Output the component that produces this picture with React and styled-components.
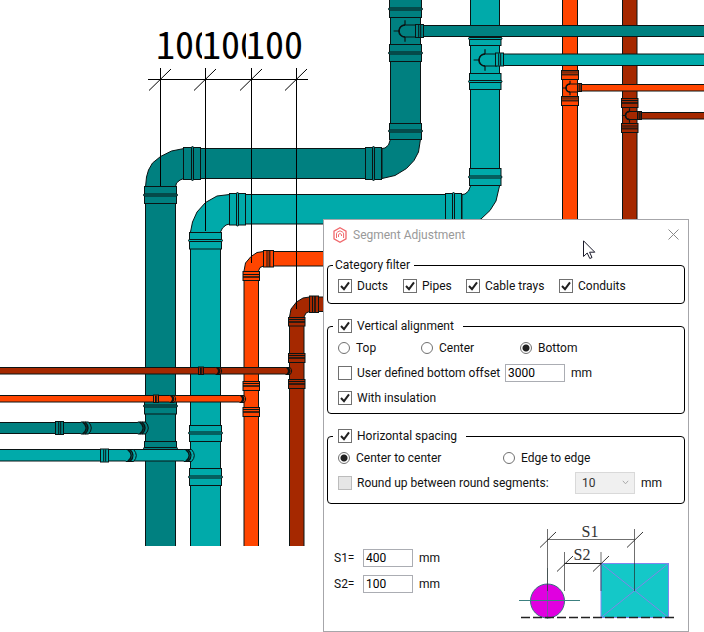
import { useState } from "react";
import styled, { createGlobalStyle, css } from "styled-components";

const colors = {
  darkTeal: "#008080",
  teal: "#00aaaa",
  orange: "#ff4500",
  brown: "#a52800",
  border: "#a6a6aa",
  text: "#111",
};

const GlobalStyle = createGlobalStyle`
  * {
    box-sizing: border-box;
  }

  body {
    margin: 0;
    background: #fff;
    color: ${colors.text};
    font-family: Roboto, "Open Sans", sans-serif;
    font-size: 12px;
    line-height: 16px;
  }
`;

const Workspace = styled.main`
  position: relative;
  min-height: 100vh;
  overflow: hidden;
`;

const Drawing = styled.svg`
  display: block;
  width: 100%;
  height: auto;
`;

const DimensionText = styled.text`
  fill: #000;
  stroke: none;
  font-family: "Noto Sans CJK SC", "Liberation Sans", sans-serif;
  font-size: 38px;
  font-feature-settings: "hwid";
`;

const Dialog = styled.section`
  position: absolute;
  top: 219px;
  right: 15px;
  width: 366px;
  padding: 0 3px 5px;
  background: #fff;
  border: 1px solid ${colors.border};
`;

const TitleBar = styled.header`
  display: flex;
  align-items: center;
  height: 29px;
  padding: 0 6px;
  margin-bottom: 8px;
`;

const Title = styled.h1`
  flex: 1;
  margin: 0 0 0 6px;
  color: #999;
  font-size: 12px;
  font-weight: 400;
`;

const CloseButton = styled.button`
  display: flex;
  padding: 0;
  border: none;
  background: none;
`;

const Groups = styled.div`
  display: flex;
  flex-direction: column;
  gap: 14px;
`;

const Group = styled.fieldset`
  min-width: 0;
  margin: 0;
  padding: ${({ $pad }) => $pad};
  border: 1px solid #000;
  border-radius: 4px;
`;

const Legend = styled.legend`
  height: 16px;
  margin-left: -5px;
  padding: ${({ $check }) => ($check ? "0 9px 0 5px" : "0 4px 0 2px")};
`;

const Row = styled.div`
  display: grid;
  grid-template-columns: ${({ $columns }) => $columns || "auto"};
  align-items: center;
  height: 25px;
`;

const Option = styled.label`
  display: flex;
  align-items: center;
  gap: 5px;
  white-space: nowrap;
`;

const Check = styled.input`
  appearance: none;
  flex: none;
  width: 14px;
  height: 14px;
  margin: 0;
  border: 1px solid #707070;
  background: #fff;

  ${({ $mark }) =>
    $mark &&
    css`
      &:checked {
        background: #fff
          url("data:image/svg+xml,%3Csvg xmlns='http://www.w3.org/2000/svg' viewBox='0 0 12 12'%3E%3Cpath d='M2 6l3 3.2L10 2.4' fill='none' stroke='%23212121' stroke-width='2'/%3E%3C/svg%3E");
      }
    `}

  &:disabled {
    border-color: #bcbcbc;
    background: #e6e6e6;
  }
`;

const Radio = styled.input`
  appearance: none;
  flex: none;
  width: 12px;
  height: 12px;
  margin: 0 1px 0 0;
  border: 1px solid #707070;
  border-radius: 50%;
  background: #fff;

  &:checked {
    background: radial-gradient(circle, #212121 3px, #fff 4px);
  }
`;

const NumberBox = styled.input`
  width: ${({ $width }) => $width}px;
  height: 18px;
  padding: 0 2px;
  border: 1px solid #abadb3;
  background: #fff;
  color: #000;
  font: inherit;
`;

const Unit = styled.span`
  padding-left: 6px;
`;

const SelectWrap = styled.div`
  display: grid;
  align-items: center;

  > * {
    grid-area: 1 / 1;
  }

  svg {
    justify-self: end;
    margin-right: 6px;
  }
`;

const Select = styled.select`
  appearance: none;
  width: 60px;
  height: 22px;
  padding: 0 6px;
  border: 1px solid #d9d9d9;
  border-radius: 0;
  background: #f0f0f0;
  color: #333;
  font: inherit;
  opacity: 1;
`;

const Footer = styled.div`
  display: flex;
  justify-content: space-between;
  padding: 14px 9px 0 7px;
`;

const Spacings = styled.div`
  padding-top: 27px;
`;

const SpacingRow = styled.div`
  display: grid;
  grid-template-columns: 29px 50px auto;
  align-items: center;
  height: 26px;
`;

const Cursor = styled.svg`
  position: absolute;
  top: 20px;
  left: 259px;
  pointer-events: none;
`;

// Rectangular sleeve round a vertical pipe, with the raised seam at `mid`
const SleeveV = ({ x, w, y, h, fill, mid, thin }) => (
  <g fill={fill}>
    <rect x={x - 1} y={y} width={w + 2} height={h} />
    {thin ? (
      <g>
        <path d={`M${x - 1} ${mid - 2}h${w + 2}`} />
        <path d={`M${x - 1} ${mid + 0.5}h${w + 2}`} strokeWidth="2" opacity="0.75" />
      </g>
    ) : (
      <rect x={x - 2} y={mid - 1} width={w + 4} height="2" rx="1" />
    )}
  </g>
);

const SleeveH = ({ y, w, x, h, fill, mid, thin }) => (
  <g fill={fill}>
    <rect x={x} y={y - 1} width={h} height={w + 2} />
    {thin ? (
      <g>
        <path d={`M${mid - 2} ${y - 1}v${w + 2}`} />
        <path d={`M${mid + 0.5} ${y - 1}v${w + 2}`} strokeWidth="2" opacity="0.75" />
      </g>
    ) : (
      <rect x={mid - 1} y={y - 2} width="2" height={w + 4} rx="1" />
    )}
  </g>
);

const Tee = ({ x, y, r, fill }) => (
  <g>
    <path d={`M${x + r * 2} ${y - r}H${x}a${r} ${r} 0 0 0 0 ${r * 2}h${r * 2}`} fill={fill} />
    <path d={`M${x} ${y - r}a${r} ${r} 0 0 0 0 ${r * 2}`} fill="none" strokeWidth="1.6" />
    <path
      d={`M${x} ${y - r - r * 0.8}v${r * 0.8}M${x} ${y + r}v${r * 0.8}M${x - r * 1.9} ${y}h${r * 0.9}`}
      strokeWidth="1.2"
    />
  </g>
);

// Curved end of a branch where it meets a round duct
const Saddle = ({ x, y, h, fill }) => (
  <g fill={fill}>
    <path
      d={`M${x - h * 0.35} ${y}H${x + h * 0.3}q${h * 0.45} ${h / 2} 0 ${h}H${x - h * 0.35}`}
    />
    <path
      d={`M${x - h * 0.2} ${y}q${h * 0.6} ${h / 2} 0 ${h}M${x} ${y}q${h * 0.5} ${h / 2} 0 ${h}`}
      fill="none"
      strokeWidth="1.4"
    />
  </g>
);

const Branch = ({ x1, x2, y, h, fill }) => (
  <g>
    <rect x={x1} y={y} width={x2 - x1} height={h} fill={fill} stroke="none" />
    <path d={`M${x1} ${y}H${x2}M${x1} ${y + h}H${x2}`} />
  </g>
);

const Coupling = ({ x, y, w, h, fill }) => (
  <g fill={fill}>
    <rect x={x} y={y - 0.5} width={w} height={h + 1} />
    <path d={`M${x + w * 0.4} ${y}v${h}M${x + w * 0.65} ${y}v${h}`} />
  </g>
);

const dimensions = [
  { x: 160.5, end: 186 },
  { x: 205.5, end: 231 },
  { x: 251.5, end: 263 },
  { x: 296.5, end: 309 },
];

const PipePlan = () => {
  const { darkTeal, teal, orange, brown } = colors;

  return (
    <Drawing viewBox="0 0 704 632" role="img" aria-label="Pipe layout">
      <g stroke="#0a1414" strokeWidth="1">
        {/* dark teal duct */}
        <g fill={darkTeal}>
          <path d="M145.5 546V187L146.5 177L148.5 170L152.5 163L160.5 156.500L171.500 151L184 148.500H382V178.500H184L180 180L176.500 183L175.500 187V546" />
          <path d="M390.500 0V139L388.500 145L385 148L382 148.500V178.500L395 175.500L406.500 168.500L414 160.500L418.500 152L420.500 139V0" />
          <SleeveH x={183.5} y={148.5} w={30} h={17} mid={192.5} fill={darkTeal} />
          <SleeveH x={365.5} y={148.5} w={30} h={16} mid={373.5} fill={darkTeal} />
          <SleeveV x={145.5} y={186.5} w={30} h={17} mid={195} fill={darkTeal} />
          <SleeveV x={390.5} y={123.5} w={30} h={16} mid={131} fill={darkTeal} />
          <SleeveV x={390.5} y={44.5} w={30} h={17} mid={53} fill={darkTeal} />
          <SleeveV x={390.5} y={-1} w={30} h={18.5} mid={9} fill={darkTeal} />
          <SleeveV x={145.5} y={398.5} w={30} h={15.5} mid={406} fill={darkTeal} />
          <SleeveV x={145.5} y={441.5} w={30} h={14} mid={448.5} fill={darkTeal} />
        </g>

        {/* light teal duct */}
        <g fill={teal}>
          <path d="M190.500 546V232L192.500 222L197 212L205.500 202.500L217 196L229.500 194.500H462V224H229.500L226 225L222.500 228L220.500 232V546" />
          <path d="M470.500 0V186L468.500 191L465 194L462 194.500V224H470L481 219L490 210.500L496 201L499.500 186V0" />
          <SleeveH x={229.500} y={194.5} w={29.5} h={16} mid={237.5} fill={teal} />
          <SleeveH x={445.5} y={194.5} w={29.5} h={16} mid={453.5} fill={teal} />
          <SleeveV x={190.5} y={232.5} w={30} h={16.5} mid={240.5} fill={teal} />
          <SleeveV x={190.5} y={425.5} w={30} h={16} mid={433} fill={teal} />
          <SleeveV x={190.5} y={468.5} w={30} h={17} mid={477} fill={teal} />
          <SleeveV x={470.5} y={29.5} w={29.5} h={16} mid={38.5} fill={teal} />
          <SleeveV x={470.5} y={73.5} w={29.5} h={16} mid={81.5} fill={teal} />
          <SleeveV x={470.5} y={168.5} w={29.5} h={17} mid={177} fill={teal} />
        </g>

        {/* orange pipe */}
        <g fill={orange}>
          <path d="M244 546V271L245.500 263L251 256.500L257 252.500L263.500 251.500H340V266H263.500L260 267.500L258.500 271V546" />
          <path d="M562.500 0V230H577.500V0" />
          <SleeveH x={263.5} y={251.5} w={14.5} h={10} mid={269} fill={orange} thin />
          <SleeveV x={244} y={271.5} w={14.5} h={9} mid={276.5} fill={orange} thin />
          <SleeveV x={244} y={381.5} w={14.5} h={9} mid={385.5} fill={orange} thin />
          <SleeveV x={244} y={407.5} w={14.5} h={9} mid={411.5} fill={orange} thin />
          <SleeveV x={562.5} y={70.5} w={15} h={9} mid={74} fill={orange} thin />
          <SleeveV x={562.5} y={96.5} w={15} h={9} mid={100} fill={orange} thin />
        </g>

        {/* brown pipe */}
        <g fill={brown}>
          <path d="M289.500 546V317L291 309L296.500 302L303 298L309.500 297H340V311.500H309.500L306 313L304 317V546" />
          <path d="M622.500 0V230H637V0" />
          <SleeveH x={309.5} y={297} w={14.5} h={9} mid={314.5} fill={brown} thin />
          <SleeveV x={289.5} y={317.5} w={14.5} h={8.5} mid={321.5} fill={brown} thin />
          <SleeveV x={289.5} y={353.5} w={14.5} h={9} mid={357.5} fill={brown} thin />
          <SleeveV x={289.5} y={379.5} w={14.5} h={9} mid={383.5} fill={brown} thin />
          <SleeveV x={622.5} y={98.5} w={14.5} h={9} mid={102.5} fill={brown} thin />
          <SleeveV x={622.5} y={123.5} w={14.5} h={9} mid={128} fill={brown} thin />
        </g>

        {/* branches to the right */}
        <Tee x={405} y={31} r={6} fill={darkTeal} />
        <Branch x1={417} x2={704} y={25.5} h={11} fill={darkTeal} />
        <Coupling x={415.5} y={25} w={8} h={12} fill={darkTeal} />
        <Tee x={485} y={60} r={6} fill={teal} />
        <Branch x1={497} x2={704} y={54} h={11.5} fill={teal} />
        <Coupling x={495.5} y={53.5} w={8} h={12} fill={teal} />
        <Tee x={570} y={88} r={4} fill={orange} />
        <Branch x1={578} x2={704} y={84.5} h={6.500} fill={orange} />
        <Coupling x={577.5} y={84} w={4} h={7} fill={orange} />
        <Tee x={629.5} y={115.5} r={4} fill={brown} />
        <Branch x1={638} x2={704} y={112.5} h={6.5} fill={brown} />
        <Coupling x={637.5} y={112} w={4} h={7} fill={brown} />

        {/* branches to the left */}
        <Branch x1={0} x2={289} y={367.5} h={6.500} fill={brown} />
        <Coupling x={198.5} y={367.5} w={5} h={6.500} fill={brown} />
        <Saddle x={218} y={367.5} h={7} fill={brown} />
        <Saddle x={288} y={367.5} h={7} fill={brown} />
        <Branch x1={0} x2={243} y={395.5} h={6.500} fill={orange} />
        <Coupling x={153.5} y={395.5} w={5} h={6.500} fill={orange} />
        <Saddle x={172} y={395.5} h={7} fill={orange} />
        <Saddle x={242} y={395.5} h={7} fill={orange} />
        <Branch x1={0} x2={143} y={422.5} h={11} fill={darkTeal} />
        <Coupling x={55.5} y={422} w={8} h={12} fill={darkTeal} />
        <Saddle x={85} y={422} h={12} fill={darkTeal} />
        <Saddle x={142} y={422} h={12} fill={darkTeal} />
        <Branch x1={0} x2={188} y={449.5} h={11.500} fill={teal} />
        <Coupling x={100.5} y={449.5} w={8} h={12} fill={teal} />
        <Saddle x={130} y={449.5} h={12} fill={teal} />
        <Saddle x={188} y={449.5} h={12} fill={teal} />
      </g>

      <g stroke="#000">
        <path d="M148 79.500H308" />
        {dimensions.map(({ x, end }) => (
          <path key={x} d={`M${x} 68V${end}M${x - 11.5} 90.500L${x + 10.5} 69`} />
        ))}
        {[156, 202, 246].map((x) => (
          <g key={x}>
            <rect x={x} y="28" width="54" height="34" fill="#fff" stroke="none" />
            <DimensionText x={x} y="59">
              100
            </DimensionText>
          </g>
        ))}
      </g>
    </Drawing>
  );
};

const Logo = () => (
  <svg width="14" height="16" viewBox="0 0 14 16" fill="none" stroke="#f0686c" strokeWidth="1.3">
    <path d="M7 .8L13 4.200V11.800L7 15.200L1 11.800V4.200Z" />
    <path d="M3.500 11V6.800Q3.500 5.600 4.500 5.100L7 3.800L9.700 5.200Q10.600 5.700 10.600 6.800V11" strokeWidth="1" />
    <path d="M5.500 10V7.500Q7 5.500 8.500 7.500V9" strokeWidth="1" />
  </svg>
);

const SpacingDiagram = () => (
  <svg width="158" height="108" viewBox="518 518 158 108" role="img" aria-label="S1 and S2 spacing">
    <rect x="601" y="563.500" width="67.500" height="54" fill="#14c8c8" stroke="#7f86f0" />
    <path d="M601 563.500L668.500 617.500M668.500 563.500L601 617.500" stroke="#7f86e8" />
    <circle cx="547.500" cy="601" r="17" fill="#e000e0" stroke="#3a7080" />
    <path d="M519 600.500H580" stroke="#3c8080" />
    <path d="M547.500 568V619" stroke="#3c8080" opacity="0.6" />
    <path d="M521 617.500H674" stroke="#222" strokeWidth="1.300" strokeDasharray="9 3" />
    <g stroke="#222" strokeOpacity="0.650">
      <path d="M547.500 529V591M634.500 529V591M564.500 552V591M601 552V591" />
      <path d="M547.500 539.500H634.500" />
      <path d="M564.500 563.500H601" strokeOpacity="1" />
      <path d="M540 547.500L556 532M627 547.500L643 532M557 571.500L573 556M593 571.500L609 556" strokeOpacity="0.9" />
    </g>
    <g fontFamily='"Liberation Serif", serif' fontSize="16" fill="#333" textAnchor="middle">
      <text x="590" y="537">
        S1
      </text>
      <text x="582" y="560">
        S2
      </text>
    </g>
  </svg>
);

const CheckOption = ({ label, ...rest }) => (
  <Option>
    <Check type="checkbox" $mark {...rest} />
    {label}
  </Option>
);

const RadioOption = ({ label, ...rest }) => (
  <Option>
    <Radio type="radio" {...rest} />
    {label}
  </Option>
);

const SegmentAdjustment = () => {
  const [alignment, setAlignment] = useState("Bottom");
  const [spacing, setSpacing] = useState("Center to center");

  return (
    <Dialog role="dialog" aria-labelledby="dialog-title">
      <TitleBar>
        <Logo />
        <Title id="dialog-title">Segment Adjustment</Title>
        <CloseButton type="button" aria-label="Close">
          <svg width="11" height="11" viewBox="0 0 11 11" stroke="#888">
            <path d="M.5 .5L10.500 10.500M10.500 .5L.5 10.500" />
          </svg>
        </CloseButton>
      </TitleBar>

      <Groups>
        <Group $pad="0 10px 5px">
          <Legend>Category filter</Legend>
          <Row $columns="65px 63px 93px auto">
            {["Ducts", "Pipes", "Cable trays", "Conduits"].map((label) => (
              <CheckOption key={label} label={label} defaultChecked />
            ))}
          </Row>
        </Group>

        <Group $pad="1px 10px 3px">
          <Legend $check>
            <CheckOption label="Vertical alignment" defaultChecked />
          </Legend>
          <Row $columns="83px 99px auto">
            {["Top", "Center", "Bottom"].map((label) => (
              <RadioOption
                key={label}
                label={label}
                name="alignment"
                checked={alignment === label}
                onChange={() => setAlignment(label)}
              />
            ))}
          </Row>
          <Row $columns="167px 60px auto">
            <CheckOption label="User defined bottom offset" />
            <NumberBox $width={60} defaultValue="3000" aria-label="Bottom offset" />
            <Unit>mm</Unit>
          </Row>
          <Row>
            <CheckOption label="With insulation" defaultChecked />
          </Row>
        </Group>

        <Group $pad="1px 10px 8px">
          <Legend $check>
            <CheckOption label="Horizontal spacing" defaultChecked />
          </Legend>
          <Row $columns="165px auto">
            {["Center to center", "Edge to edge"].map((label) => (
              <RadioOption
                key={label}
                label={label}
                name="spacing"
                checked={spacing === label}
                onChange={() => setSpacing(label)}
              />
            ))}
          </Row>
          <Row $columns="237px 60px auto">
            <CheckOption label="Round up between round segments:" disabled />
            <SelectWrap>
              <Select disabled defaultValue="10" aria-label="Round up step">
                <option>10</option>
              </Select>
              <svg width="7" height="5" viewBox="0 0 7 5" fill="none" stroke="#aaa">
                <path d="M.8 .8L3.500 3.800L6.200 .8" />
              </svg>
            </SelectWrap>
            <Unit>mm</Unit>
          </Row>
        </Group>
      </Groups>

      <Footer>
        <Spacings>
          <SpacingRow>
            <label htmlFor="s1">S1=</label>
            <NumberBox id="s1" $width={50} defaultValue="400" />
            <Unit>mm</Unit>
          </SpacingRow>
          <SpacingRow>
            <label htmlFor="s2">S2=</label>
            <NumberBox id="s2" $width={50} defaultValue="100" />
            <Unit>mm</Unit>
          </SpacingRow>
        </Spacings>
        <SpacingDiagram />
      </Footer>

      <Cursor width="13" height="20" viewBox="0 0 13 20" fill="#fff" stroke="#1a1a2a">
        <path d="M.5 .8V16.500L4.200 13L6.800 18.500L9 17.500L6.600 12.200H11.800Z" />
      </Cursor>
    </Dialog>
  );
};

const App = () => (
  <>
    <GlobalStyle />
    <Workspace>
      <PipePlan />
      <SegmentAdjustment />
    </Workspace>
  </>
);

export default App;
